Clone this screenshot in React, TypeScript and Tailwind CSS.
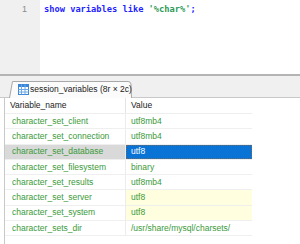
const rows: { name: string; value: string; state?: 'selected' | 'yellow' }[] = [
  { name: 'character_set_client', value: 'utf8mb4' },
  { name: 'character_set_connection', value: 'utf8mb4' },
  { name: 'character_set_database', value: 'utf8', state: 'selected' },
  { name: 'character_set_filesystem', value: 'binary' },
  { name: 'character_set_results', value: 'utf8mb4' },
  { name: 'character_set_server', value: 'utf8', state: 'yellow' },
  { name: 'character_set_system', value: 'utf8', state: 'yellow' },
  { name: 'character_sets_dir', value: '/usr/share/mysql/charsets/' },
];

function GridIcon() {
  return (
    <svg width="11" height="11" viewBox="0 0 11 11" className="shrink-0">
      <rect x="0.5" y="0.5" width="10" height="10" fill="#ffffff" stroke="#3a86d8" />
      <rect x="0.5" y="0.5" width="10" height="2.5" fill="#3a86d8" />
      <path d="M0.5 5.5h10M0.5 8h10M3.5 0.5v10M7 0.5v10" stroke="#6aa8e8" strokeWidth="1" />
    </svg>
  );
}

export default function App() {
  return (
    <div
      className="w-[300px] h-[244px] bg-white overflow-hidden text-[8.5px] text-[#222]"
      style={{ fontFamily: '"Liberation Sans", Arial, sans-serif' }}
    >
      {/* Query editor */}
      <div className="flex h-[74px]">
        <div className="w-[40px] bg-[#f0f0f0] text-right pr-[13px] pt-[3px] text-[9px] text-[#8a8a8a]">1</div>
        <div
          className="pl-[4px] pt-[3px] text-[8.7px] font-bold text-[#1f1fff] whitespace-pre"
          style={{ fontFamily: '"DejaVu Sans Mono", monospace' }}
        >
          show variables like <span className="text-[#2e9a5a]">'%char%'</span>;
        </div>
      </div>
      <div className="h-[2px] bg-[#b4b4b4]" />

      {/* Result tabs */}
      <div className="h-[22px] bg-[#f0f0f0] border-b border-[#c8c8c8] flex items-end pl-[9px]">
        <div className="relative h-[16px] w-[123px] flex items-center gap-[1px] pl-[9px]">
          <svg className="absolute inset-0" width="123" height="17" viewBox="0 0 123 17">
            <path d="M0.5 17 L3.5 0.5 H119 Q121.5 0.5 122 3 L122.5 17" fill="#fbfbfb" stroke="#a8a8a8" />
          </svg>
          <div className="relative flex items-center gap-[1px]">
            <GridIcon />
            <span className="whitespace-nowrap">session_variables (8r × 2c)</span>
          </div>
        </div>
      </div>

      {/* Data grid */}
      <div className="ml-[4px] border-l border-[#c8c8c8] h-full">
        <div className="flex w-[247px] h-[16px] items-center border-b border-[#eeeeee]">
          <div className="w-[121px] pl-[5px] border-r border-[#e4e4e4] h-full flex items-center">Variable_name</div>
          <div className="pl-[5px]">Value</div>
        </div>
        {rows.map((r) => (
          <div key={r.name} className="flex w-[247px] h-[15.25px] border-b border-[#efefef] text-[#3a9a3a]">
            <div
              className={`w-[121px] pl-[7px] flex items-center border-r border-[#ececec] ${
                r.state === 'selected' ? 'bg-[#d9d9d9]' : ''
              }`}
            >
              {r.name}
            </div>
            <div
              className={`flex-1 pl-[5px] flex items-center ${
                r.state === 'selected'
                  ? 'bg-[#0a74d6] text-white outline outline-1 outline-dotted outline-[#6a6a6a] -outline-offset-1'
                  : r.state === 'yellow'
                  ? 'bg-[#ffffe0]'
                  : ''
              }`}
            >
              {r.value}
            </div>
          </div>
        ))}
      </div>
    </div>
  );
}
